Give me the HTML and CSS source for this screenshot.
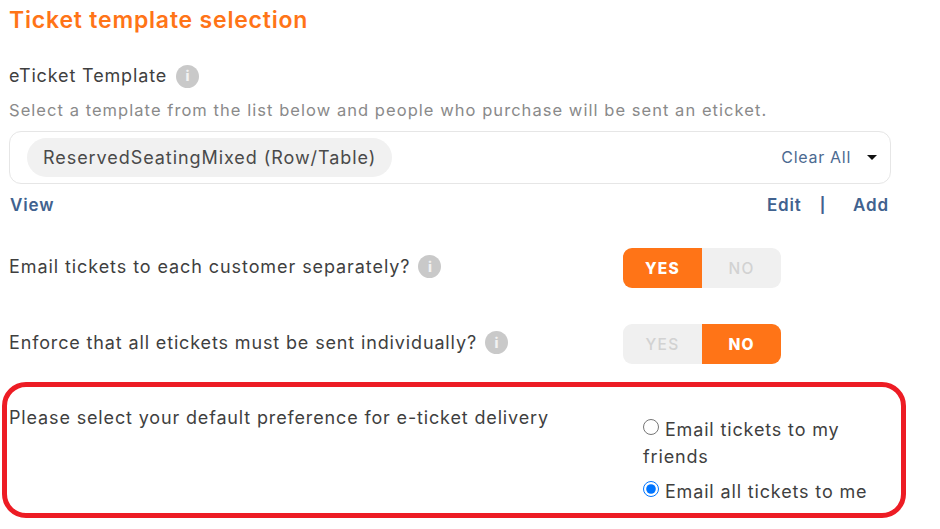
FILE: index.html
```html
<!DOCTYPE html>
<html lang="en">
<head>
    <meta charset="UTF-8">
    <meta name="viewport" content="width=device-width, initial-scale=1.0">
    <title>Ticket template selection</title>

    <link rel="stylesheet" href="styles.css">
</head>
<body>
    <div class="page">
        <h1 class="title">Ticket template selection</h1>

        <div class="field-label">eTicket Template <span class="info">i</span></div>
        <p class="hint">Select a template from the list below and people who purchase will be sent an eticket.</p>

        <div class="select-box">
            <span class="chip">ReservedSeatingMixed (Row/Table)</span>
            <span class="clear-all">Clear All</span>
            <span class="caret"></span>
        </div>

        <div class="links">
            <a class="link">View</a>
            <div class="links-right">
                <a class="link">Edit</a>
                <span class="link link-sep">|</span>
                <a class="link">Add</a>
            </div>
        </div>

        <div class="row row-first">
            <div class="row-label">Email tickets to each customer separately? <span class="info">i</span></div>
            <div class="toggle">
                <span class="toggle-opt on">YES</span>
                <span class="toggle-opt">NO</span>
            </div>
        </div>

        <div class="row row-second">
            <div class="row-label">Enforce that all etickets must be sent individually? <span class="info">i</span></div>
            <div class="toggle">
                <span class="toggle-opt">YES</span>
                <span class="toggle-opt on">NO</span>
            </div>
        </div>

        <div class="highlight">
            <div class="highlight-label">Please select your default preference for e-ticket delivery</div>
            <div class="radios">
                <label class="radio-line"><input type="radio" name="delivery"> Email tickets to my friends</label>
                <label class="radio-line"><input type="radio" name="delivery" checked> Email all tickets to me</label>
            </div>
        </div>
    </div>
</body>
</html>
```

FILE: styles.css
```css
* {
    box-sizing: border-box;
}

body {
    margin: 0;
    background: #fff;
    color: #3f3f3f;
    font-family: "Inter", "Liberation Sans", sans-serif;
    font-size: 18px;
    letter-spacing: 0.85px;
}

.page {
    width: 940px;
    height: 529px;
    padding: 6px 0 0 9px;
    overflow: hidden;
}

.title {
    margin: 0;
    color: #ff7417;
    font-size: 23px;
    line-height: 29px;
    font-weight: 600;
    letter-spacing: 0.8px;
}

.field-label {
    display: flex;
    align-items: center;
    gap: 9px;
    margin-top: 27px;
    line-height: 28px;
}

.info {
    display: inline-flex;
    align-items: center;
    justify-content: center;
    width: 23px;
    height: 23px;
    border-radius: 50%;
    background: #c9c9c9;
    color: #f2f2f2;
    font-size: 14px;
    font-weight: 800;
    letter-spacing: 0;
}

.hint {
    margin: 9px 0 0;
    color: #8a8a8a;
    font-size: 16.5px;
    line-height: 22px;
    letter-spacing: 1.05px;
}

.select-box {
    display: flex;
    align-items: center;
    width: 882px;
    height: 53px;
    margin-top: 10px;
    padding: 0 13px 0 17px;
    border: 1.5px solid #e6e6e6;
    border-radius: 12px;
}

.chip {
    padding: 0 16px;
    border-radius: 20px;
    background: #f1f1f1;
    color: #4a4a4a;
    line-height: 39px;
    letter-spacing: 0.94px;
}

.clear-all {
    margin-left: auto;
    padding-bottom: 2px;
    color: #4c6a91;
    font-size: 16px;
    letter-spacing: 0.7px;
}

.caret {
    width: 0;
    height: 0;
    margin-left: 16px;
    border: 5px solid transparent;
    border-top: 5px solid #111;
    border-bottom: 0;
}

.links {
    display: flex;
    justify-content: space-between;
    width: 880px;
    margin-top: 9px;
    padding-left: 1px;
    line-height: 24px;
}

.links-right {
    display: flex;
    gap: 18px;
}

.link {
    color: #41628f;
    font-size: 17px;
    font-weight: 600;
}

.link-sep {
    margin-right: 9px;
    font-size: 15px;
    font-weight: 700;
}

.row {
    display: flex;
    align-items: flex-start;
}

.row-first {
    margin-top: 31px;
}

.row-second {
    margin-top: 36px;
}

.row-label {
    display: flex;
    align-items: center;
    gap: 8px;
    width: 614px;
    height: 37px;
    letter-spacing: 0.92px;
}

.row-second .row-label {
    letter-spacing: 0.86px;
}

.toggle {
    display: flex;
    width: 158px;
    height: 40px;
    border-radius: 9px;
    overflow: hidden;
    background: #f0f0f0;
}

.toggle-opt {
    flex: 1;
    color: #d2d2d2;
    font-size: 15.5px;
    font-weight: 500;
    line-height: 42px;
    text-align: center;
    letter-spacing: 1.2px;
}

.toggle-opt.on {
    background: #ff7417;
    color: #fff;
    font-weight: 800;
}

.highlight {
    display: flex;
    align-items: flex-start;
    width: 904px;
    height: 136px;
    margin: 18px 0 0 -7px;
    padding: 19px 0 0 2px;
    border: 5px solid #ed1c24;
    border-radius: 24px;
}

.highlight-label {
    width: 634px;
    line-height: 24px;
}

.radios {
    width: 240px;
    padding-top: 10px;
}

.radio-line {
    display: block;
    margin-bottom: 8px;
    line-height: 27px;
}

.radio-line input {
    width: 16px;
    height: 16px;
    margin: 0;
    vertical-align: 1px;
    accent-color: #0075ff;
}
```
